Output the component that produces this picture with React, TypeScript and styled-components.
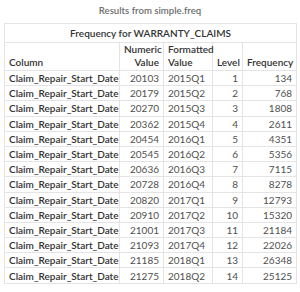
import React from "react";
import styled, { createGlobalStyle } from "styled-components";

const Global = createGlobalStyle`
  html, body { margin: 0; padding: 0; background: #fff; }
  body { font-family: Lato, "Liberation Sans", sans-serif; }
`;

const Page = styled.div`
  width: 300px;
  padding: 4px 4px 0 4px;
  box-sizing: border-box;
`;

const Caption = styled.div`
  text-align: center;
  font-size: 9.6px;
  font-weight: 600;
  color: #6e6e6e;
  height: 19px;
  line-height: 14px;
`;

const Table = styled.table`
  border-collapse: collapse;
  width: 292px;
  table-layout: fixed;
  font-size: 10px;
  color: #3c3c3c;
`;

const TitleCell = styled.th`
  border: 1px solid #e4e4e4;
  height: 18px;
  padding: 0;
  font-weight: 600;
  color: #333;
  text-align: center;
  vertical-align: middle;
`;

const HeadCell = styled.th<{ $align?: "left" | "right" }>`
  border: 1px solid #e4e4e4;
  height: 22px;
  padding: 0 4px 1px 4px;
  font-weight: 600;
  color: #333;
  line-height: 13px;
  text-align: ${(p) => p.$align ?? "left"};
  vertical-align: bottom;
`;

const RowHead = styled.th`
  border: 1px solid #e4e4e4;
  height: 14.2px;
  padding: 0 4px;
  font-weight: 600;
  color: #333;
  text-align: left;
  white-space: nowrap;
`;

const Cell = styled.td<{ $align?: "left" | "right" }>`
  border: 1px solid #e4e4e4;
  height: 14.2px;
  padding: 0 4px;
  font-weight: 400;
  color: #505050;
  text-align: ${(p) => p.$align ?? "right"};
  white-space: nowrap;
`;

const rows: [number, string, number, number][] = [
  [20103, "2015Q1", 1, 134],
  [20179, "2015Q2", 2, 768],
  [20270, "2015Q3", 3, 1808],
  [20362, "2015Q4", 4, 2611],
  [20454, "2016Q1", 5, 4351],
  [20545, "2016Q2", 6, 5356],
  [20636, "2016Q3", 7, 7115],
  [20728, "2016Q4", 8, 8278],
  [20820, "2017Q1", 9, 12793],
  [20910, "2017Q2", 10, 15320],
  [21001, "2017Q3", 11, 21184],
  [21093, "2017Q4", 12, 22026],
  [21185, "2018Q1", 13, 26348],
  [21275, "2018Q2", 14, 25125],
];

export default function App() {
  return (
    <Page>
      <Global />
      <Caption>Results from simple.freq</Caption>
      <Table>
        <colgroup>
          <col style={{ width: 115 }} />
          <col style={{ width: 44 }} />
          <col style={{ width: 49 }} />
          <col style={{ width: 30 }} />
          <col style={{ width: 54 }} />
        </colgroup>
        <thead>
          <tr>
            <TitleCell colSpan={5}>Frequency for WARRANTY_CLAIMS</TitleCell>
          </tr>
          <tr>
            <HeadCell>Column</HeadCell>
            <HeadCell $align="right">
              Numeric
              <br />
              Value
            </HeadCell>
            <HeadCell>
              Formatted
              <br />
              Value
            </HeadCell>
            <HeadCell $align="right">Level</HeadCell>
            <HeadCell $align="right">Frequency</HeadCell>
          </tr>
        </thead>
        <tbody>
          {rows.map(([num, fmt, lvl, freq]) => (
            <tr key={lvl}>
              <RowHead>Claim_Repair_Start_Date</RowHead>
              <Cell>{num}</Cell>
              <Cell $align="left">{fmt}</Cell>
              <Cell>{lvl}</Cell>
              <Cell>{freq}</Cell>
            </tr>
          ))}
        </tbody>
      </Table>
    </Page>
  );
}
